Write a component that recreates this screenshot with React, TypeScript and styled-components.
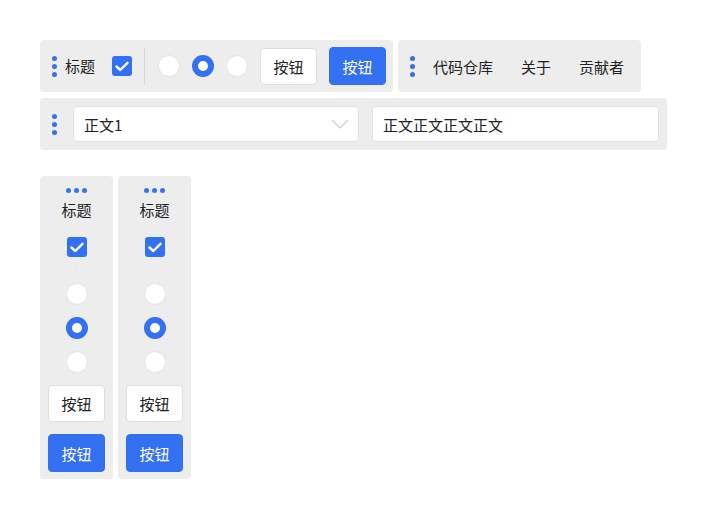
import React from "react";
import styled, { createGlobalStyle } from "styled-components";

const BLUE = "#3470f2";

const GlobalStyle = createGlobalStyle`
  html, body { margin: 0; padding: 0; background: #ffffff; }
  body {
    font-family: "Noto Sans CJK SC", "Noto Sans", "Liberation Sans", sans-serif;
    color: #222222;
    font-size: 15px;
  }
  * { box-sizing: border-box; }
`;

const Page = styled.div`
  padding: 40px;
  display: flex;
  flex-direction: column;
  align-items: flex-start;
  gap: 6px;
`;

const Row = styled.div`
  display: flex;
  gap: 5px;
  align-items: flex-start;
`;

const VerticalRow = styled(Row)`
  margin-top: 20px;
`;

const Toolbar = styled.div<{ $vertical?: boolean }>`
  display: flex;
  flex-direction: ${(p) => (p.$vertical ? "column" : "row")};
  align-items: center;
  gap: 12px;
  background: #ededed;
  border-radius: 4px;
  ${(p) =>
    p.$vertical
      ? `width: 73px; padding: 12px 8px 7px;`
      : `height: 52px; padding: 0 7px 0 12px;`}
`;

const Handle = styled.div<{ $vertical?: boolean }>`
  display: flex;
  flex-direction: ${(p) => (p.$vertical ? "row" : "column")};
  gap: 3px;
  flex-shrink: 0;
  margin: ${(p) => (p.$vertical ? "0 0 -5px 0" : "0 -4px 0 0")};
`;

const Dot = styled.span`
  width: 5px;
  height: 5px;
  border-radius: 50%;
  background: ${BLUE};
`;

const Label = styled.span<{ $vertical?: boolean }>`
  font-size: 15px;
  line-height: 20px;
  white-space: nowrap;
  padding: ${(p) => (p.$vertical ? "0 0 5px 0" : "0 5px 0 0")};
`;

const CheckBox = styled.span`
  width: 20px;
  height: 20px;
  border-radius: 3px;
  background: ${BLUE};
  display: flex;
  align-items: center;
  justify-content: center;
  flex-shrink: 0;
`;

const Divider = styled.span<{ $vertical?: boolean }>`
  background: #d8d8d8;
  flex-shrink: 0;
  ${(p) =>
    p.$vertical
      ? `width: 1px; height: 1px; margin-bottom: 1px;`
      : `width: 1px; height: 37px; margin-right: 1px;`}
`;

const Radio = styled.span<{ $checked?: boolean }>`
  width: 22px;
  height: 22px;
  border-radius: 50%;
  background: #ffffff;
  flex-shrink: 0;
  border: ${(p) => (p.$checked ? `6px solid ${BLUE}` : "1px solid #e4e4e4")};
`;

const Button = styled.button<{ $primary?: boolean }>`
  width: 57px;
  height: ${(p) => (p.$primary ? "38px" : "37px")};
  flex-shrink: 0;
  border-radius: 4px;
  font-family: inherit;
  font-size: 15px;
  padding: 0;
  cursor: pointer;
  border: 1px solid ${(p) => (p.$primary ? BLUE : "#dedede")};
  background: ${(p) => (p.$primary ? BLUE : "#ffffff")};
  color: ${(p) => (p.$primary ? "#ffffff" : "#222222")};
`;

const Menu = styled.div`
  display: flex;
  gap: 8px;
`;

const TextButton = styled.button`
  border: none;
  background: transparent;
  padding: 0 10px;
  height: 37px;
  font-family: inherit;
  font-size: 15px;
  color: #222222;
  cursor: pointer;
  white-space: nowrap;
`;

const Select = styled.div`
  width: 286px;
  height: 36px;
  margin-left: 8px;
  background: #ffffff;
  border: 1px solid #e2e2e2;
  border-radius: 4px;
  padding: 0 9px 0 10px;
  display: flex;
  align-items: center;
  justify-content: space-between;
  font-size: 15px;
  flex-shrink: 0;
`;

const TextInput = styled.input`
  width: 287px;
  height: 36px;
  margin: 0 1px 0 1px;
  background: #ffffff;
  border: 1px solid #e2e2e2;
  border-radius: 4px;
  padding: 0 10px;
  font-family: inherit;
  font-size: 15px;
  color: #222222;
  outline: none;
  flex-shrink: 0;
`;

const DragHandle = ({ vertical }: { vertical?: boolean }) => (
  <Handle $vertical={vertical}>
    <Dot />
    <Dot />
    <Dot />
  </Handle>
);

const Check = () => (
  <svg width="14" height="11" viewBox="0 0 14 11" fill="none">
    <path d="M1.5 5.5 L5.3 9 L12.5 1.8" stroke="#ffffff" strokeWidth="2.4" strokeLinecap="round" strokeLinejoin="round" />
  </svg>
);

const Chevron = () => (
  <svg width="18" height="10" viewBox="0 0 18 10" fill="none">
    <path d="M1 1 L9 9 L17 1" stroke="#cfcfcf" strokeWidth="1.2" />
  </svg>
);

const ControlsToolbar = ({ vertical }: { vertical?: boolean }) => (
  <Toolbar $vertical={vertical}>
    <DragHandle vertical={vertical} />
    <Label $vertical={vertical}>标题</Label>
    <CheckBox>
      <Check />
    </CheckBox>
    <Divider $vertical={vertical} />
    <Radio />
    <Radio $checked />
    <Radio />
    <Button>按钮</Button>
    <Button $primary>按钮</Button>
  </Toolbar>
);

export default function App() {
  return (
    <>
      <GlobalStyle />
      <Page>
        <Row>
          <ControlsToolbar />
          <Toolbar>
            <DragHandle />
            <Menu>
              <TextButton>代码仓库</TextButton>
              <TextButton>关于</TextButton>
              <TextButton>贡献者</TextButton>
            </Menu>
          </Toolbar>
        </Row>
        <Toolbar>
          <DragHandle />
          <Select>
            <span>正文1</span>
            <Chevron />
          </Select>
          <TextInput defaultValue="正文正文正文正文" />
        </Toolbar>
        <VerticalRow>
          <ControlsToolbar vertical />
          <ControlsToolbar vertical />
        </VerticalRow>
      </Page>
    </>
  );
}
